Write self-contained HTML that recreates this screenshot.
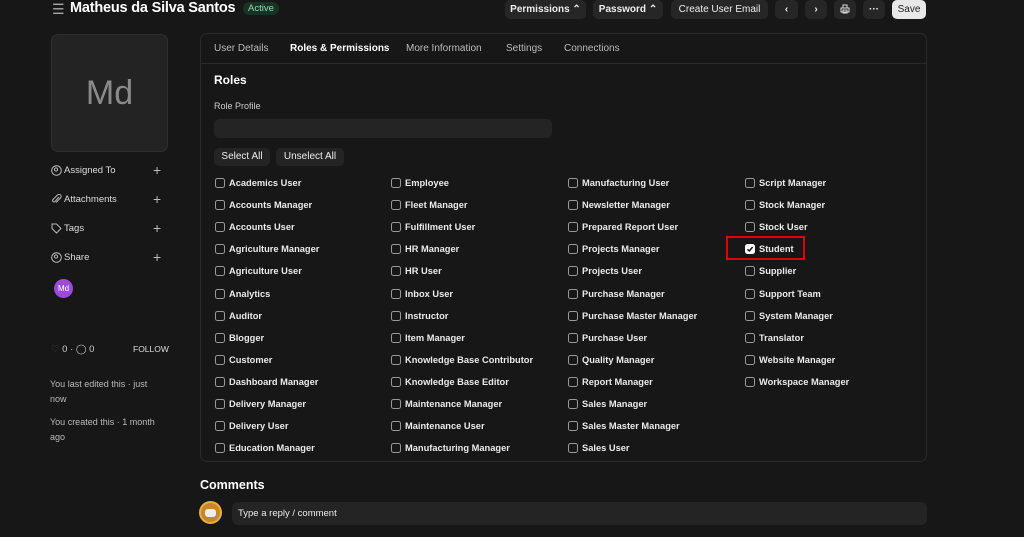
<!DOCTYPE html>
<html><head><meta charset="utf-8"><style>
*{box-sizing:border-box;margin:0;padding:0}
body{width:1024px;height:537px;background:#171717;font-family:"Liberation Sans",sans-serif;color:#ececec;position:relative;overflow:hidden;font-size:9.5px}
.a{position:absolute;white-space:nowrap}
.btn{position:absolute;top:0;height:19px;background:#262626;border-radius:5px;font-size:10px;line-height:19px;text-align:center;color:#eee;font-weight:bold}
.cb{position:absolute;width:10px;height:10px;border:1.3px solid #999;border-radius:2.5px}
.lb{position:absolute;font-size:9.3px;font-weight:bold;color:#eaeaea;white-space:nowrap;line-height:12px}
.side{position:absolute;left:64px;font-size:9.5px;color:#ddd;line-height:12px}
.plus{position:absolute;left:153px;font-size:14px;color:#bbb;line-height:12px}
.ic{position:absolute;left:51px}
</style></head><body>
<div class="a" style="left:52px;top:1px;font-size:14px;color:#aaa">☰</div>
<div class="a" style="left:70px;top:0px;font-size:14.5px;font-weight:bold;color:#fff;letter-spacing:-0.2px">Matheus da Silva Santos</div>
<div class="a" style="left:243px;top:2px;height:13px;padding:0 5px;background:#163326;color:#8fdcb0;border-radius:7px;font-size:9.5px;line-height:13px">Active</div>
<div class="btn" style="left:505px;width:81px">Permissions ⌃</div>
<div class="btn" style="left:593px;width:70px">Password ⌃</div>
<div class="btn" style="left:671px;width:97px;font-weight:normal">Create User Email</div>
<div class="btn" style="left:775px;width:23px">‹</div>
<div class="btn" style="left:805px;width:22px">›</div>
<div class="btn" style="left:834px;width:22px"><svg width="10" height="10" viewBox="0 0 10 10" style="margin-top:4px" fill="none" stroke="#ddd" stroke-width="1"><rect x="1" y="4" width="8" height="4"/><rect x="3" y="1" width="4" height="3"/><rect x="3" y="6" width="4" height="3"/></svg></div>
<div class="btn" style="left:863px;width:22px">···</div>
<div class="btn" style="left:892px;width:34px;background:#e8e8e8;color:#222;font-weight:normal">Save</div>

<div class="a" style="left:51px;top:34px;width:117px;height:118px;background:#232323;border:1px solid #2e2e2e;border-radius:7px;font-size:34px;color:#8a8a8a;text-align:center;line-height:116px">Md</div>
<svg class="ic" style="top:165px" width="11" height="11" viewBox="0 0 11 11" fill="none" stroke="#bbb"><circle cx="5.5" cy="5.5" r="4.8"/><circle cx="5" cy="4.5" r="1.6"/></svg><div class="side" style="top:165px">Assigned To</div><div class="plus" style="top:164px">+</div>
<svg class="ic" style="top:194px" width="11" height="11" viewBox="0 0 11 11" fill="none" stroke="#bbb"><path d="M8 3 L4 7.5 a1.3 1.3 0 0 1-2-2 L6.5 1 a2 2 0 0 1 3 3 L5 8.5"/></svg><div class="side" style="top:194px">Attachments</div><div class="plus" style="top:193px">+</div>
<svg class="ic" style="top:223px" width="11" height="11" viewBox="0 0 11 11" fill="none" stroke="#bbb"><path d="M1 1h4.5l4.5 4.5-4.5 4.5L1 5.5z"/></svg><div class="side" style="top:223px">Tags</div><div class="plus" style="top:222px">+</div>
<svg class="ic" style="top:252px" width="11" height="11" viewBox="0 0 11 11" fill="none" stroke="#bbb"><circle cx="5.5" cy="5.5" r="4.8"/><circle cx="5" cy="4.5" r="1.6"/></svg><div class="side" style="top:252px">Share</div><div class="plus" style="top:251px">+</div>
<div class="a" style="left:54px;top:279px;width:19px;height:19px;border-radius:50%;background:#9c4ad8;color:#fff;font-size:8px;line-height:19px;text-align:center">Md</div>
<div class="a" style="left:51px;top:344px;font-size:9.5px;color:#ccc"><span style="color:#444">♡</span> 0 · <span>◯</span> 0</div>
<div class="a" style="left:133px;top:344px;font-size:8.5px;color:#ddd">FOLLOW</div>
<div class="a" style="left:50px;top:377px;font-size:9px;color:#bbb;line-height:14.5px;white-space:normal;width:108px">You last edited this · just now</div>
<div class="a" style="left:50px;top:415px;font-size:9px;color:#bbb;line-height:14.5px;white-space:normal;width:115px">You created this · 1 month ago</div>

<div class="a" style="left:200px;top:33px;width:727px;height:429px;border:1px solid #2a2a2a;border-radius:7px"></div>
<div class="a" style="left:201px;top:63px;width:725px;height:1px;background:#2a2a2a"></div>
<div class="a" style="left:214px;top:43px;font-size:10px;color:#bbb">User Details</div>
<div class="a" style="left:290px;top:43px;font-size:10px;font-weight:bold;color:#fff">Roles &amp; Permissions</div>
<div class="a" style="left:406px;top:43px;font-size:10px;color:#bbb">More Information</div>
<div class="a" style="left:506px;top:43px;font-size:10px;color:#bbb">Settings</div>
<div class="a" style="left:564px;top:43px;font-size:10px;color:#bbb">Connections</div>
<div class="a" style="left:214px;top:73px;font-size:12px;font-weight:bold;color:#fff">Roles</div>
<div class="a" style="left:214px;top:101px;font-size:9px;color:#ccc">Role Profile</div>
<div class="a" style="left:214px;top:119px;width:338px;height:19px;background:#242424;border-radius:5px"></div>
<div class="a" style="left:214px;top:148px;width:56px;height:18px;background:#242424;border-radius:5px;font-size:10px;line-height:18px;text-align:center">Select All</div>
<div class="a" style="left:276px;top:148px;width:68px;height:18px;background:#242424;border-radius:5px;font-size:10px;line-height:18px;text-align:center">Unselect All</div>
<div id="g"></div>
<div class="a" style="left:726px;top:236px;width:79px;height:24px;border:2px solid #e00000"></div>

<div class="a" style="left:200px;top:478px;font-size:12.5px;font-weight:bold;color:#fff">Comments</div>
<div class="a" style="left:199px;top:501px;width:23px;height:23px;border-radius:50%;background:#c9852a;border:2px solid #e3b14a"><div style="margin:6px 4px;width:11px;height:8px;background:#eee;border-radius:3px"></div></div>
<div class="a" style="left:232px;top:502px;width:695px;height:23px;background:#242424;border-radius:6px;font-size:9.5px;line-height:23px;padding-left:6px">Type a reply / comment</div>
<script>
var cols=[["Academics User","Accounts Manager","Accounts User","Agriculture Manager","Agriculture User","Analytics","Auditor","Blogger","Customer","Dashboard Manager","Delivery Manager","Delivery User","Education Manager"],
["Employee","Fleet Manager","Fulfillment User","HR Manager","HR User","Inbox User","Instructor","Item Manager","Knowledge Base Contributor","Knowledge Base Editor","Maintenance Manager","Maintenance User","Manufacturing Manager"],
["Manufacturing User","Newsletter Manager","Prepared Report User","Projects Manager","Projects User","Purchase Manager","Purchase Master Manager","Purchase User","Quality Manager","Report Manager","Sales Manager","Sales Master Manager","Sales User"],
["Script Manager","Stock Manager","Stock User","Student","Supplier","Support Team","System Manager","Translator","Website Manager","Workspace Manager"]];
var xs=[215,391,568,745],h="";
cols.forEach(function(c,i){c.forEach(function(t,j){var y=183+j*22.1;var chk=t=="Student";
h+='<div class="cb" style="left:'+xs[i]+'px;top:'+(y-5)+'px;'+(chk?'background:#fff;border-color:#fff;':'')+'">'+(chk?'<svg width="8" height="8" viewBox="0 0 8 8" style="position:absolute;left:0;top:0"><path d="M1.5 4.2 L3.3 6 L6.6 2" fill="none" stroke="#111" stroke-width="1.4"/></svg>':'')+'</div>';
h+='<div class="lb" style="left:'+(xs[i]+14)+'px;top:'+(y-6)+'px">'+t+'</div>';});});
document.getElementById("g").innerHTML=h;
</script>
</body></html>
